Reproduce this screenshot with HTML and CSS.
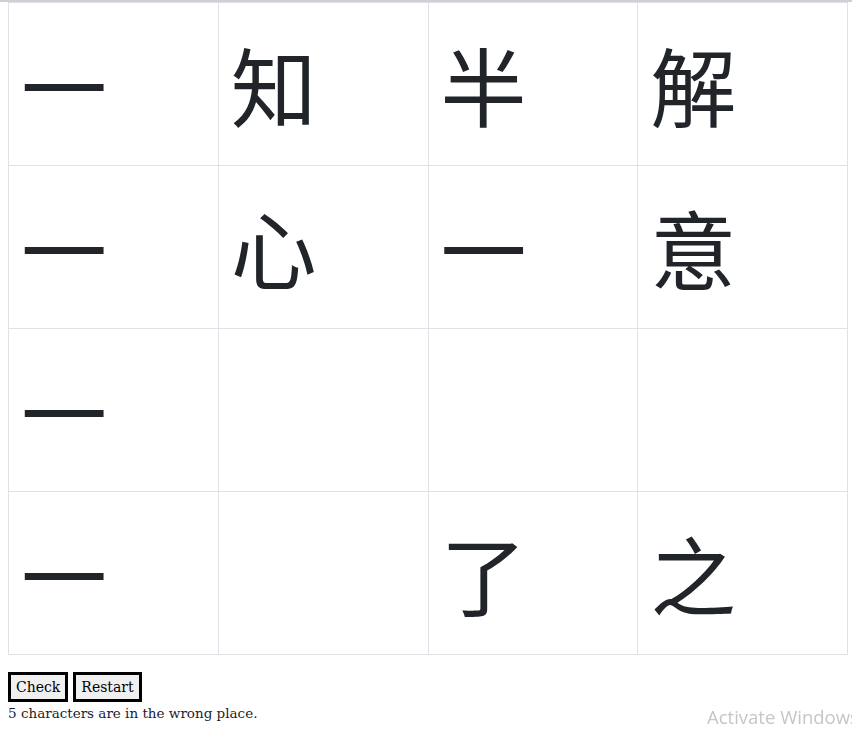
FILE: index.html
```html
<!DOCTYPE html>
<html lang="zh-Hant">
<head>
<meta charset="utf-8">
<title>Puzzle</title>
<link rel="stylesheet" href="styles.css">
</head>
<body>
<div class="topline"></div>
<main class="page">
  <table class="grid">
    <tr><td>一</td><td>知</td><td>半</td><td>解</td></tr>
    <tr><td>一</td><td>心</td><td>一</td><td>意</td></tr>
    <tr><td>一</td><td></td><td></td><td></td></tr>
    <tr><td>一</td><td></td><td>了</td><td>之</td></tr>
  </table>
  <div class="controls">
    <button class="btn" type="button">Check</button>
    <button class="btn" type="button">Restart</button>
  </div>
  <div class="status">5 characters are in the wrong place.</div>
</main>
<div class="watermark">Activate Windows</div>
</body>
</html>
```
FILE: styles.css
```css
html, body {
  margin: 0;
  padding: 0;
  background: #ffffff;
  overflow: hidden;
}
body {
  font-family: "DejaVu Serif", "Liberation Serif", serif;
  color: #1a1a2a;
}
.topline {
  height: 2px;
  background: #cdcfd2;
}
.page {
  padding: 0 8px;
}
.grid {
  width: 840px;
  border-collapse: collapse;
  table-layout: fixed;
}
.grid td {
  border: 1px solid #dee2e6;
  height: 163px;
  padding: 0 0 0 12px;
  vertical-align: middle;
  font-family: "Noto Sans CJK TC", "Noto Sans CJK SC", sans-serif;
  font-size: 86px;
  line-height: 1;
  color: #212529;
  box-sizing: border-box;
}
.controls {
  display: flex;
  gap: 5px;
  margin-top: 17px;
}
.btn {
  font-family: "DejaVu Serif", "Liberation Serif", serif;
  font-size: 14px;
  height: 30px;
  padding: 0 5px;
  background: #f0f0f0;
  border: 3px solid #000000;
  color: #000000;
  margin: 0;
}
.status {
  font-size: 13.5px;
  line-height: 22px;
  color: #1c1c30;
}
.watermark {
  position: fixed;
  left: 707px;
  top: 704px;
  font-family: "Open Sans", "Noto Sans", sans-serif;
  font-size: 18.5px;
  color: #c6c6c6;
  white-space: nowrap;
}
```
